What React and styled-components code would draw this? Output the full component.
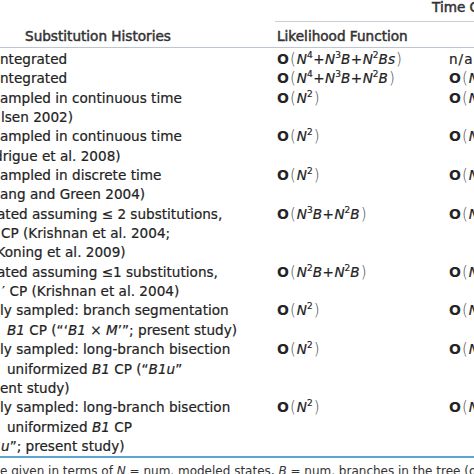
import styled, { createGlobalStyle } from "styled-components";

const GlobalStyle = createGlobalStyle`
  * {
    margin: 0;
    padding: 0;
    box-sizing: border-box;
  }

  html, body {
    background: #fff;
  }

  body {
    font-family: "DejaVu Sans", "Liberation Sans", sans-serif;
    color: #232323;
  }
`;

// Layout
const Page = styled.div`
  width: 474px;
  height: 474px;
  overflow: hidden;
  background: #fff;
  font-size: 13.6px;
  -webkit-text-stroke: 0.2px #232323;
`;

const SpanRow = styled.div`
  display: grid;
  grid-template-columns: 275px 1fr;
  height: 22px;
`;

const SpanCell = styled.div`
  grid-column: 2;
  border-bottom: 1px solid #c9cdd5;
  padding-left: 157px;
  line-height: 15px;
  color: #333;
  -webkit-text-stroke: 0.5px #333;
  white-space: nowrap;
`;

const HeaderRow = styled.div`
  display: grid;
  grid-template-columns: 277px 172px 1fr;
  padding: 5px 0 1px;
  border-bottom: 1.5px solid #bcc6d2;
`;

const HeadCell = styled.div`
  padding-left: ${(p) => p.$pad || 0}px;
  line-height: 19px;
  color: #333;
  -webkit-text-stroke: 0.5px #333;
  white-space: nowrap;
`;

const Body = styled.div`
  display: flex;
  flex-direction: column;
  padding-top: 2px;
  border-bottom: 2px solid #5ba4d4;
`;

const Row = styled.div`
  display: grid;
  grid-template-columns: 277px 172px 1fr;
  line-height: 19.35px;
`;

const HistCell = styled.div`
  overflow: hidden;
`;

const Line = styled.div`
  white-space: nowrap;
  margin-left: ${(p) => p.$shift}px;
`;

const MathCell = styled.div`
  white-space: nowrap;
  overflow: hidden;
`;

const Formula = styled.span`
  display: inline-flex;
  align-items: baseline;
`;

const OSign = styled.span`
  font-weight: bold;
  font-size: 14px;
  -webkit-text-stroke: 0;
`;

const Paren = styled.span`
  font-weight: 200;
  font-size: 15px;
  color: #444;
  -webkit-text-stroke: 0;
  margin: 0 1px;
`;

const Var = styled.span`
  font-style: italic;
`;

const Sup = styled.sup`
  font-size: 9px;
  vertical-align: 6px;
  line-height: 0;
`;

const Plus = styled.span`
  margin: 0 0.5px;
`;

const NA = styled.span`
  letter-spacing: 1px;
`;

const Em = styled.i`
  font-style: italic;
`;

const Note = styled.p`
  margin-top: 5px;
  font-size: 12px;
  line-height: 16px;
  white-space: nowrap;
  color: #333;
  -webkit-text-stroke: 0;
`;

// table rows, the left column is cropped in the source so only the visible part is kept
const rows = [
  {
    lines: [{ text: "ntegrated" }],
    lik: [["N", "4"], "+", ["N", "3"], ["B"], "+", ["N", "2"], ["Bs"]],
    time: "n/a",
  },
  {
    lines: [{ text: "ntegrated" }],
    lik: [["N", "4"], "+", ["N", "3"], ["B"], "+", ["N", "2"], ["B"]],
    time: [["N", "4"], ["B"]],
  },
  {
    lines: [{ text: "ampled in continuous time" }, { text: "lsen 2002)", shift: 1 }],
    lik: [["N", "2"]],
    time: [["N", "2"]],
  },
  {
    lines: [
      { text: "ampled in continuous time" },
      { text: "drigue et al. 2008)", shift: -6 },
    ],
    lik: [["N", "2"]],
    time: [["N", "2"]],
  },
  {
    lines: [{ text: "ampled in discrete time" }, { text: "ang and Green 2004)" }],
    lik: [["N", "2"]],
    time: [["N", "2"]],
  },
  {
    lines: [
      { text: "ated assuming \u2264 2 substitutions,", shift: -3 },
      { text: "CP (Krishnan et al. 2004;", shift: 1 },
      { text: "Koning et al. 2009)", shift: -3.5 },
    ],
    lik: [["N", "3"], ["B"], "+", ["N", "2"], ["B"]],
    time: [["N", "3"], ["B"]],
  },
  {
    lines: [
      { text: "ated assuming \u22641 substitutions,", shift: -3 },
      { text: "\u2032 CP (Krishnan et al. 2004)", shift: 2 },
    ],
    lik: [["N", "2"], ["B"], "+", ["N", "2"], ["B"]],
    time: [["N", "2"], ["B"]],
  },
  {
    lines: [
      { text: "ly sampled: branch segmentation" },
      {
        text: (
          <>
            <Em>B1</Em> CP (“‘<Em>B1</Em> × <Em>M</Em>’”; present study)
          </>
        ),
        shift: 7,
      },
    ],
    lik: [["N", "2"]],
    time: [["N", "2"]],
  },
  {
    lines: [
      { text: "ly sampled: long-branch bisection" },
      {
        text: (
          <>
            uniformized <Em>B1</Em> CP (“<Em>B1u</Em>”
          </>
        ),
        shift: 7,
      },
      { text: "ent study)" },
    ],
    lik: [["N", "2"]],
    time: [["N", "2"]],
  },
  {
    lines: [
      { text: "ly sampled: long-branch bisection" },
      {
        text: (
          <>
            uniformized <Em>B1</Em> CP
          </>
        ),
        shift: 7,
      },
      {
        text: (
          <>
            <Em>u</Em>”; present study)
          </>
        ),
        shift: 1,
      },
    ],
    lik: [["N", "2"]],
    time: [["N", "2"]],
  },
];

const BigO = ({ terms }) => (
  <Formula>
    <OSign>O</OSign>
    <Paren>(</Paren>
    {terms.map((t, i) =>
      typeof t === "string" ? (
        <Plus key={i}>{t}</Plus>
      ) : (
        <span key={i}>
          <Var>{t[0]}</Var>
          {t[1] && <Sup>{t[1]}</Sup>}
        </span>
      )
    )}
    <Paren>)</Paren>
  </Formula>
);

const App = () => {
  return (
    <>
      <GlobalStyle />
      <Page>
        <SpanRow>
          <SpanCell>Time Complexity</SpanCell>
        </SpanRow>
        <HeaderRow>
          <HeadCell $pad={25}>Substitution Histories</HeadCell>
          <HeadCell>Likelihood Function</HeadCell>
          <HeadCell />
        </HeaderRow>
        <Body>
          {rows.map((row, i) => (
            <Row key={i}>
              <HistCell>
                {row.lines.map((line, j) => (
                  <Line key={j} $shift={line.shift || 0}>
                    {line.text}
                  </Line>
                ))}
              </HistCell>
              <MathCell>
                <BigO terms={row.lik} />
              </MathCell>
              <MathCell>
                {typeof row.time === "string" ? (
                  <NA>{row.time}</NA>
                ) : (
                  <BigO terms={row.time} />
                )}
              </MathCell>
            </Row>
          ))}
        </Body>
        <Note>
          e given in terms of <Em>N</Em> = num. modeled states, <Em>B</Em> = num.
          branches in the tree (or s
        </Note>
      </Page>
    </>
  );
};

export default App;
